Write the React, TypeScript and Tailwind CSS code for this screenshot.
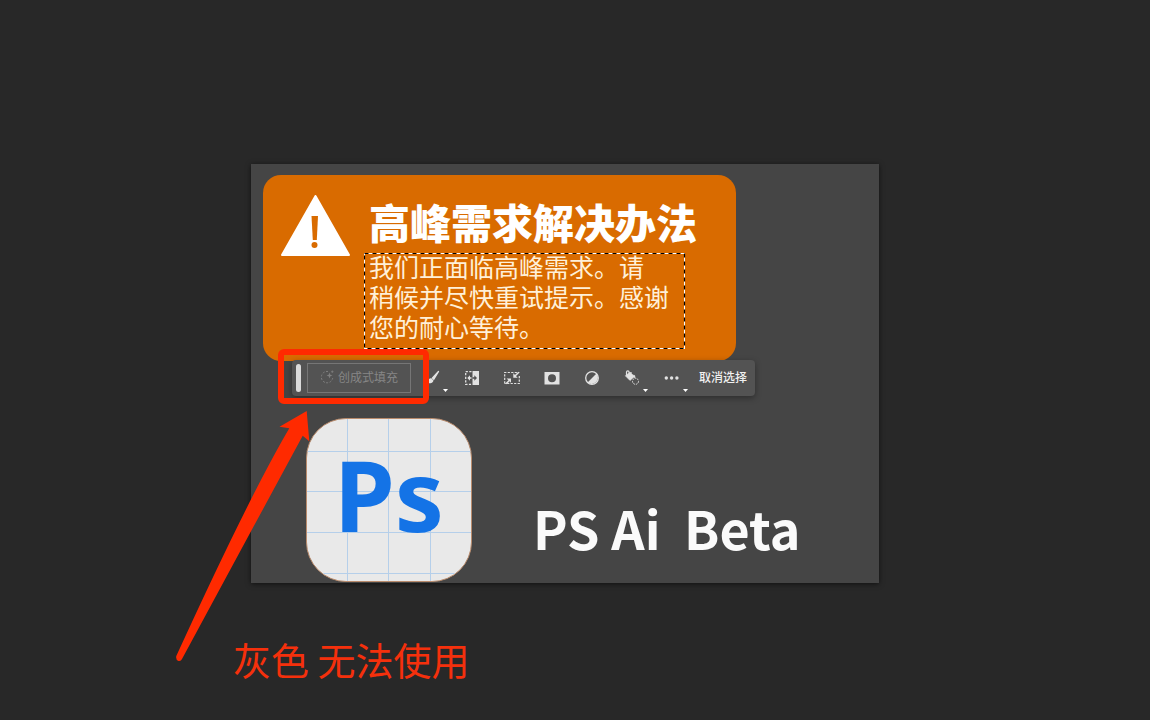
import React from 'react';

const caretTools = ['brush', 'fill', 'more'];

const tools = [
  { id: 'brush', label: '修改选区' },
  { id: 'invert', label: '反相选区' },
  { id: 'transform', label: '变换选区' },
  { id: 'mask', label: '从选区创建蒙版' },
  { id: 'adjust', label: '创建新的调整图层' },
  { id: 'fill', label: '填充选区' },
  { id: 'more', label: '更多选项' },
];

function ToolIcon({ id }: { id: string }) {
  return (
    <svg width="16" height="16" viewBox="0 0 16 16" fill="none" stroke="#e2e2e2" aria-hidden="true">
      {id === 'brush' && (
        <>
          <path d="M14.500 1.500 8.500 8l1.300 1.200Z" fill="#e2e2e2" strokeWidth="1.400" strokeLinejoin="round" />
          <path d="M7.400 8.300c-2-.3-2.700 1-3 2.200-.2 1-1 1.900-2.200 2.200 2.400 1.200 7 .7 7.300-2.300Z" fill="#e2e2e2" stroke="none" />
          <path d="M1.500 5v2M1.500 9v2M2 14.500h2" strokeWidth="1.200" />
        </>
      )}
      {id === 'invert' && (
        <>
          <path d="M8.500 1H15v14H8.500Z" fill="#e2e2e2" stroke="none" />
          <path d="M7.500 1.700H1.700v12.600h5.800" strokeWidth="1.300" strokeDasharray="2.200 1.400" />
          <path d="M7.500 8H4.500" strokeWidth="1.600" />
          <path d="M6 5.300 3.300 8 6 10.700Z" fill="#e2e2e2" stroke="none" />
          <path d="M8.500 8h2.500" stroke="#535353" strokeWidth="1.600" />
          <path d="M10.300 5.300 13 8l-2.700 2.700Z" fill="#535353" stroke="none" />
        </>
      )}
      {id === 'transform' && (
        <>
          <path d="M.700 13.500v-11h14.600M15.300 6v7.500H.700" strokeWidth="1.200" strokeDasharray="2.200 1.300" />
          <path d="M14.800 2.300 11 6M2 13.800l3.500-3.500" strokeWidth="1.600" />
          <path d="M9.300 3.300v4.400h4.400ZM7 12.800V8.500H2.600Z" fill="#e2e2e2" stroke="none" />
        </>
      )}
      {id === 'mask' && (
        <path d="M.500 2h15v12.500H.500ZM8 4.300a4 4 0 1 0 0 8 4 4 0 0 0 0-8Z" fill="#e2e2e2" fillRule="evenodd" stroke="none" />
      )}
      {id === 'adjust' && (
        <>
          <circle cx="8" cy="8" r="6.300" strokeWidth="1.300" />
          <path d="M12.500 3.500a6.400 6.400 0 0 1-9 9Z" fill="#e2e2e2" stroke="none" />
        </>
      )}
      {id === 'fill' && (
        <>
          <path d="M6 2.200 10.500 6.500 6 10.500 1.300 5.800Z" fill="#e2e2e2" stroke="#e2e2e2" strokeWidth=".6" strokeLinejoin="round" />
          <path d="M2.500 5V2.200a1.300 1.300 0 0 1 2.600 0V4M7 2v1.500" strokeWidth="1.200" />
          <path d="M9.500 5c1.300.5 1.500 1.500 1.300 3" strokeWidth="1.200" />
          <circle cx="11.500" cy="11.300" r="3" strokeDasharray="1.600 1" />
        </>
      )}
      {id === 'more' && (
        <g fill="#e2e2e2" stroke="none">
          <circle cx="2.300" cy="8" r="1.700" />
          <circle cx="7.600" cy="8" r="1.700" />
          <circle cx="12.900" cy="8" r="1.700" />
        </g>
      )}
    </svg>
  );
}

function WarningBanner() {
  return (
    <section className="flex w-[473px] items-start rounded-[18px] bg-[#d96b00] pt-4 pb-5 pl-[17px]">
      <svg className="mt-1 shrink-0" width="72" height="62" viewBox="0 0 72 62" aria-hidden="true">
        <path d="M35.500 1 69 60H2Z" fill="#fff" stroke="#fff" strokeWidth="2" strokeLinejoin="round" />
        <path d="M31.500 21h6.500l-1.200 24h-4Z" fill="#d96b00" />
        <circle cx="34.500" cy="50" r="3" fill="#d96b00" />
      </svg>
      <div className="ml-[17px]">
        <h1 className="text-[41px] leading-[60px] font-black text-white">高峰需求解决办法</h1>
        <p className="text-[25px] leading-[30px] text-[#fff0d8]">
          我们正面临高峰需求。请
          <br />
          稍候并尽快重试提示。感谢
          <br />
          您的耐心等待。
        </p>
      </div>
    </section>
  );
}

function Marquee() {
  return (
    <svg className="absolute top-[88px] left-[113px]" width="322" height="98" viewBox="0 0 322 98" fill="none" aria-hidden="true">
      <rect x=".5" y="1.500" width="320" height="95" stroke="#fff" />
      <rect x=".5" y="1.500" width="320" height="95" stroke="#000" strokeWidth="1.200" strokeDasharray="4 4" />
    </svg>
  );
}

function TaskBar() {
  return (
    <div
      role="toolbar"
      aria-label="上下文任务栏"
      className="absolute top-[196px] left-[41px] flex h-9 items-center rounded bg-[#535353] pr-2 pl-1 shadow-[0_2px_6px_rgba(0,0,0,0.35)]"
    >
      <div className="h-7 w-[5px] rounded-full bg-[#dadada]" />
      <button
        disabled
        className="mr-px ml-1.5 flex h-[30px] w-[104px] items-center border border-[#767676] pb-0.5 pl-3 text-[12px] leading-4 text-[#868686]"
      >
        <svg className="mr-1 shrink-0" width="14" height="14" viewBox="0 0 14 14" fill="none" stroke="#808080" aria-hidden="true">
          <path d="M8 1.500A5.700 5.700 0 1 0 12.700 8" strokeDasharray="2 1.500" />
          <path d="M9.500 2.500 10.300 4.700 12.500 5.500 10.300 6.300 9.500 8.500 8.700 6.300 6.500 5.500 8.700 4.700Z" fill="#808080" stroke="none" />
          <path d="M12.300.500v2.400M11.100 1.700h2.400" strokeWidth=".8" />
        </svg>
        <span className="whitespace-nowrap">创成式填充</span>
      </button>
      {tools.map(tool => (
        <button key={tool.id} aria-label={tool.label} className="relative flex h-9 w-10 items-center justify-center">
          <ToolIcon id={tool.id} />
          {caretTools.includes(tool.id) && (
            <svg className="absolute right-1 bottom-1" width="5" height="3" viewBox="0 0 5 3" aria-hidden="true">
              <path d="M0 0h5L2.500 3Z" fill="#fff" />
            </svg>
          )}
        </button>
      ))}
      <button className="ml-[7px] pb-0.5 text-[12px] leading-4 font-medium whitespace-nowrap text-[#f0f0f0]">取消选择</button>
    </div>
  );
}

function PsLogo() {
  return (
    <div className="relative flex h-[164px] w-[166px] items-center justify-center overflow-hidden rounded-[40px] border border-[#b98b6c] bg-[#e9e9e9]">
      <svg className="absolute inset-0" width="164" height="162" viewBox="0 0 164 162" stroke="#b5cfea" aria-hidden="true">
        <path d="M40.500 0v162M81.500 0v162M123.500 0v162M0 32.500h164M0 72.500h164M0 113.500h164M0 154.500h164" />
      </svg>
      <span className="relative pb-3 font-['Noto_Sans'] text-[98px] leading-[100px] font-bold text-[#1473e6]">Ps</span>
    </div>
  );
}

export default function App() {
  return (
    <main className="flex min-h-screen flex-col items-center overflow-hidden bg-[#282828] pt-[164px] pr-5 font-['Noto_Sans_CJK_SC',sans-serif]">
      <div className="relative w-[664px]">
        <div className="relative mx-[18px] bg-[#454545] px-3 pt-[11px] pb-px shadow-[0_1px_5px_rgba(0,0,0,0.6)]">
          <WarningBanner />
          <div className="mt-[57px] ml-[43px] flex items-end">
            <PsLogo />
            <p className="ml-[61px] pb-4 text-[52px] leading-[76px] font-bold whitespace-pre text-[#fafafa]">PS Ai  Beta</p>
          </div>
          <Marquee />
          <TaskBar />
        </div>

        {/* red annotations on top of the document */}
        <div className="absolute top-[185px] left-[45px] h-[55px] w-[151px] rounded-md border-6 border-[#ff2a00]" />
        <svg className="absolute top-[246px] -left-[58px]" width="136" height="254" viewBox="0 0 136 254" aria-hidden="true">
          <path d="M131.700 1 104.500 16.700 114.300 18.300Q75 85 1.300 246Q.500 250 3.500 251Q6 251.500 7 249L127.700 25.700 134.300 31.300Z" fill="#ff2a00" />
        </svg>
        <p className="mt-12 text-[38px] leading-[56px] text-[#f5300c]">灰色 无法使用</p>
      </div>
    </main>
  );
}
